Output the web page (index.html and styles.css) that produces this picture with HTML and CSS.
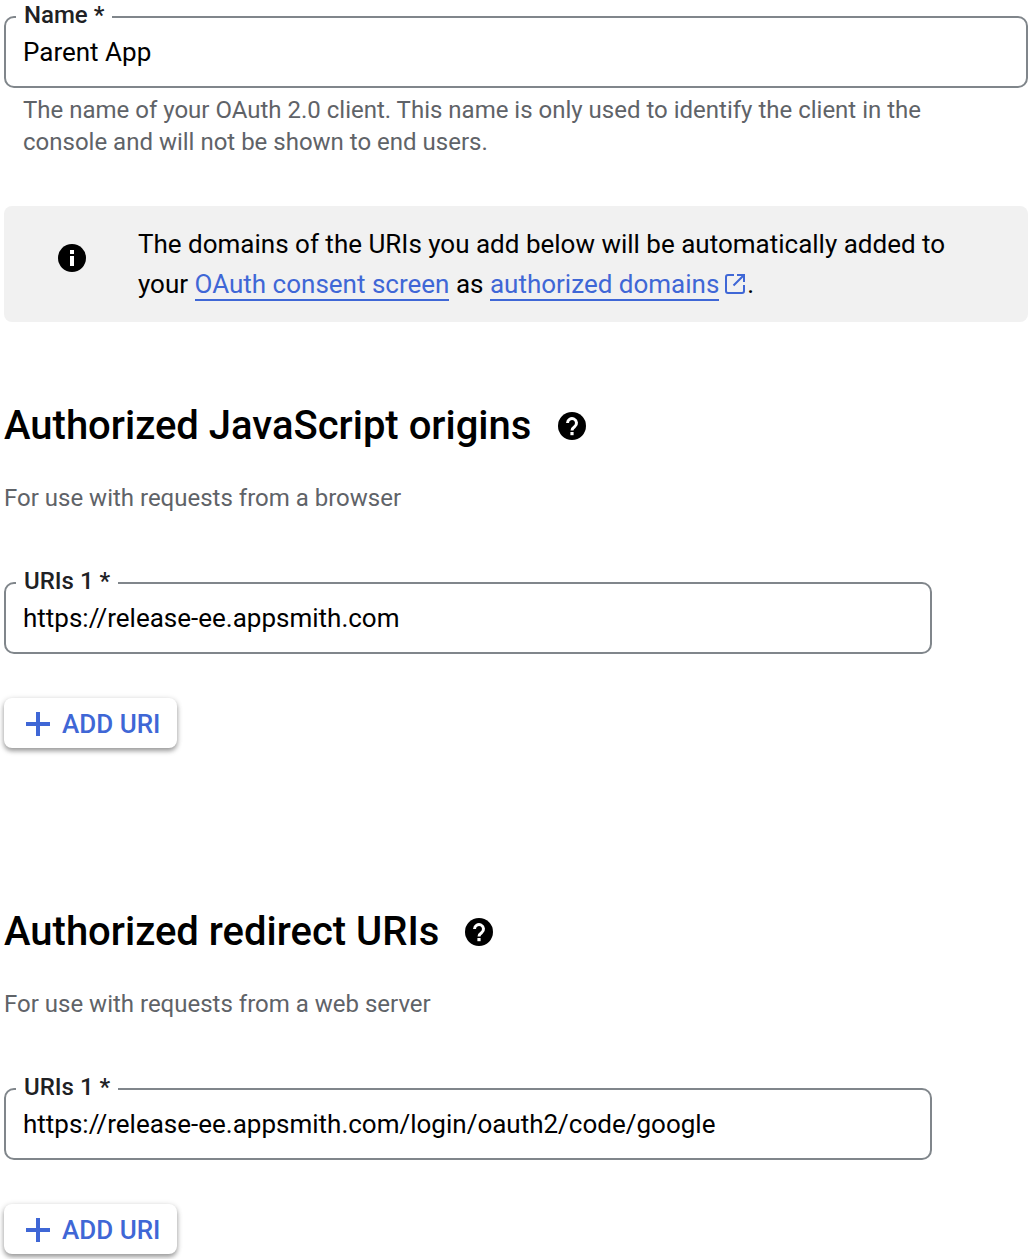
FILE: index.html
```html
<!DOCTYPE html>
<html lang="en">
<head>
<meta charset="utf-8">
<title>OAuth client</title>
<link rel="stylesheet" href="styles.css">
</head>
<body>
<main class="page">
  <div class="field field-full">
    <span class="field-label">Name *</span>
    <span class="field-value">Parent App</span>
  </div>
  <p class="hint">The name of your OAuth 2.0 client. This name is only used to identify the client in the console and will not be shown to end users.</p>

  <div class="notice">
    <svg class="notice-icon" viewBox="0 0 28 28" aria-hidden="true"><circle cx="14" cy="14" r="14" fill="#000"/><rect x="12" y="6" width="4" height="4" fill="#fff"/><rect x="12" y="12" width="4" height="10" fill="#fff"/></svg>
    <p class="notice-text">The domains of the URIs you add below will be automatically added to your <a class="link" href="#">OAuth consent screen</a> as <a class="link" href="#">authorized domains</a><svg class="ext-icon" viewBox="0 0 24 24" aria-hidden="true"><path d="M11 3H5a2 2 0 0 0-2 2v14a2 2 0 0 0 2 2h14a2 2 0 0 0 2-2v-6M14 3h7v7M21 3 10.500 13.500" fill="none" stroke="#3f67d6" stroke-width="2"/></svg>.</p>
  </div>

  <section class="section section-first">
    <h2 class="section-title">Authorized JavaScript origins
      <svg class="help-icon help-wide" viewBox="0 0 28 28" aria-hidden="true"><circle cx="14" cy="14" r="14" fill="#000"/><path d="M9.500 11a4.500 4.500 0 1 1 7.200 3.600c-1.500 1.100-2.700 1.900-2.700 3.900" fill="none" stroke="#fff" stroke-width="3"/><rect x="12.400" y="20" width="3.200" height="3.200" fill="#fff"/></svg>
    </h2>
    <p class="section-sub">For use with requests from a browser</p>
    <div class="field field-uri">
      <span class="field-label">URIs 1 *</span>
      <span class="field-value">https://release-ee.appsmith.com</span>
    </div>
    <button class="add-btn" type="button"><svg class="plus" viewBox="0 0 24 24" aria-hidden="true"><path d="M0 12h24M12 0v24" stroke="#3f67d6" stroke-width="4" fill="none"/></svg>ADD URI</button>
  </section>

  <section class="section section-second">
    <h2 class="section-title">Authorized redirect URIs
      <svg class="help-icon" viewBox="0 0 28 28" aria-hidden="true"><circle cx="14" cy="14" r="14" fill="#000"/><path d="M9.500 11a4.500 4.500 0 1 1 7.200 3.600c-1.500 1.100-2.700 1.900-2.700 3.900" fill="none" stroke="#fff" stroke-width="3"/><rect x="12.400" y="20" width="3.200" height="3.200" fill="#fff"/></svg>
    </h2>
    <p class="section-sub">For use with requests from a web server</p>
    <div class="field field-uri">
      <span class="field-label">URIs 1 *</span>
      <span class="field-value">https://release-ee.appsmith.com/login/oauth2/code/google</span>
    </div>
    <button class="add-btn" type="button"><svg class="plus" viewBox="0 0 24 24" aria-hidden="true"><path d="M0 12h24M12 0v24" stroke="#3f67d6" stroke-width="4" fill="none"/></svg>ADD URI</button>
  </section>
</main>
</body>
</html>
```

FILE: styles.css
```css
* { box-sizing: border-box; }
html, body { margin: 0; background: #fff; }
body { font-family: Roboto, "Liberation Sans", sans-serif; color: #000; height: 1259px; overflow: hidden; }
.page { padding: 16px 4px 0; display: flex; flex-direction: column; }

.field { position: relative; height: 72px; border: 2px solid #80868b; border-radius: 10px; display: flex; align-items: center; padding: 0 17px; }
.field-full { width: 1024px; }
.field-uri { width: 928px; }
.field-label { position: absolute; left: 10px; top: -17px; padding: 0 8px; background: #fff; font-size: 24px; font-weight: 500; line-height: 28px; color: #202124; }
.field-value { font-size: 26px; line-height: 32px; color: #000; }

.hint { margin: 6px 0 0; padding: 0 19px; font-size: 24px; line-height: 32px; color: #5f6368; max-width: 1000px; }

.notice { margin-top: 48px; height: 116px; background: #f1f1f1; border-radius: 8px; display: flex; align-items: center; padding-left: 54px; }
.notice-icon { width: 28px; height: 28px; flex: none; margin-bottom: 12px; }
.notice-text { margin: 0 0 0 52px; font-size: 26px; line-height: 40px; color: #000; max-width: 860px; }
.link { color: #3f67d6; text-decoration: none; border-bottom: 2px solid #3f67d6; }
.ext-icon { width: 24px; height: 24px; margin-left: 4px; vertical-align: -3px; }

.section { display: flex; flex-direction: column; align-items: flex-start; }
.section-first { margin-top: 78px; }
.section-second { margin-top: 158px; }
.section-title { margin: 0; font-size: 40px; line-height: 52px; font-weight: 500; color: #000; display: flex; align-items: center; }
.help-icon { width: 28px; height: 28px; margin-left: 26px; }
.help-wide { margin-left: 27px; }
.section-sub { margin: 30px 0 0; font-size: 24px; line-height: 32px; color: #5f6368; }
.section .field { margin-top: 68px; }

.add-btn { margin-top: 44px; width: 173px; height: 50px; padding: 2px 0 0 22px; background: #fff; border: 0; border-radius: 8px; box-shadow: 0 3px 5px rgba(0,0,0,.35), 0 1px 6px rgba(0,0,0,.12); color: #3f67d6; font: 500 26px/1 Roboto, sans-serif; display: flex; align-items: center; gap: 12px; }
.plus { width: 24px; height: 24px; flex: none; }
```
